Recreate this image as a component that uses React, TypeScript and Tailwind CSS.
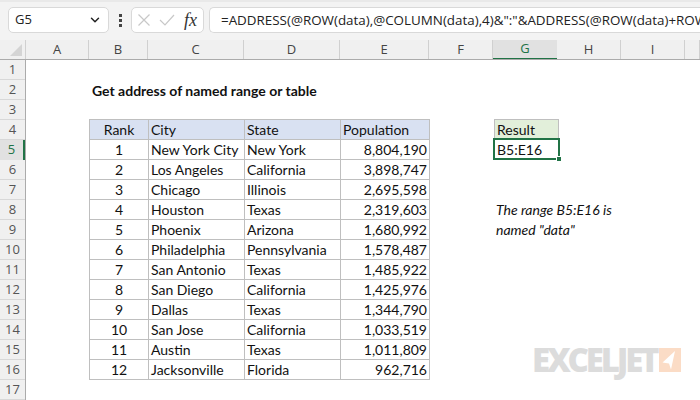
import { ChevronDown } from 'lucide-react';

const columns = [
  { name: 'A', width: 63 },
  { name: 'B', width: 59 },
  { name: 'C', width: 96 },
  { name: 'D', width: 96 },
  { name: 'E', width: 89 },
  { name: 'F', width: 64 },
  { name: 'G', width: 64 },
  { name: 'H', width: 64 },
  { name: 'I', width: 64 },
  { name: '', width: 15 },
];

const rowNumbers = Array.from({ length: 17 }, (_, i) => i + 1);

const cities = [
  ['1', 'New York City', 'New York', '8,804,190'],
  ['2', 'Los Angeles', 'California', '3,898,747'],
  ['3', 'Chicago', 'Illinois', '2,695,598'],
  ['4', 'Houston', 'Texas', '2,319,603'],
  ['5', 'Phoenix', 'Arizona', '1,680,992'],
  ['6', 'Philadelphia', 'Pennsylvania', '1,578,487'],
  ['7', 'San Antonio', 'Texas', '1,485,922'],
  ['8', 'San Diego', 'California', '1,425,976'],
  ['9', 'Dallas', 'Texas', '1,344,790'],
  ['10', 'San Jose', 'California', '1,033,519'],
  ['11', 'Austin', 'Texas', '1,011,809'],
  ['12', 'Jacksonville', 'Florida', '962,716'],
];

const formula = '=ADDRESS(@ROW(data),@COLUMN(data),4)&":"&ADDRESS(@ROW(data)+ROWS(data)-1,@COLUMN(data)+COLUMNS(data)-1,4)';

function FormulaBar() {
  return (
    <div className="h-[40px] flex items-start bg-[#f3f3f3] border-t-2 border-[#e9e9e9] pt-[5px] pl-[8px] text-[13px] text-[#222]">
      <div className="w-[101px] h-[26px] flex items-center justify-between pl-[6px] pr-[6px] bg-white border border-[#d9d9d9] rounded-[5px]">
        <span>G5</span>
        <ChevronDown size={14} strokeWidth={2.5} />
      </div>
      <div className="w-[22px] h-[26px] flex flex-col items-center justify-center gap-[2px]">
        <span className="w-[3px] h-[3px] bg-[#444]" />
        <span className="w-[3px] h-[3px] bg-[#444]" />
        <span className="w-[3px] h-[3px] bg-[#444]" />
      </div>
      <div className="w-[73px] h-[26px] flex items-center gap-[9px] pl-[6px] bg-white border border-[#d9d9d9] rounded-[5px]">
        <svg width="12" height="12" viewBox="0 0 12 12" fill="none" stroke="#c8c8c8" strokeWidth="1.2">
          <path d="M0.5 0.5l11 11M11.5 0.5l-11 11" />
        </svg>
        <svg width="16" height="12" viewBox="0 0 16 12" fill="none" stroke="#c8c8c8" strokeWidth="1.2">
          <path d="M1 6l5 5L15 1" />
        </svg>
        <span className="font-['Liberation_Serif',serif] italic text-[18px] leading-none text-[#333]">fx</span>
      </div>
      <div className="w-[5px]" />
      <div className="flex-1 min-w-0 h-[26px] flex items-center pl-[11px] bg-white border border-r-0 border-[#d9d9d9] rounded-l-[5px] overflow-hidden whitespace-nowrap text-[13.4px]">
        {formula}
      </div>
    </div>
  );
}

function ColumnHeaders() {
  return (
    <div className="h-[20px] flex overflow-hidden bg-[#f0f0f0] border-b border-[#ababab]">
      <div className="w-[26px] shrink-0 relative border-r border-[#d0d0d0]">
        <div className="absolute right-[3px] bottom-[3px] w-0 h-0 border-l-[12px] border-l-transparent border-b-[12px] border-b-[#d4d4d4]" />
      </div>
      {columns.map(col => (
        <div
          key={col.name}
          style={{ width: col.width }}
          className={
            col.name === 'G'
              ? 'shrink-0 h-[20px] flex items-center justify-center bg-[#e1e1e1] border-b-2 border-[#217346] text-[#217346]'
              : 'shrink-0 flex items-center justify-center border-r border-[#d0d0d0] text-[#444]'
          }
        >
          {col.name}
        </div>
      ))}
    </div>
  );
}

function RowHeaders() {
  return (
    <div className="w-[26px] shrink-0 bg-[#f0f0f0] border-r border-[#ababab]">
      {rowNumbers.map(n => (
        <div
          key={n}
          className={
            n === 5
              ? 'h-[20px] flex items-center justify-center bg-[#e1e1e1] border-r-2 border-[#217346] text-[#217346]'
              : 'h-[20px] flex items-center justify-center border-b border-[#d8d8d8] text-[#555]'
          }
        >
          {n}
        </div>
      ))}
    </div>
  );
}

function CityTable() {
  return (
    <table className="w-[340px] h-[260px] table-fixed border-collapse text-[14px] leading-[19px] text-[#111]">
      <colgroup>
        <col className="w-[59px]" />
        <col className="w-[96px]" />
        <col className="w-[96px]" />
        <col className="w-[89px]" />
      </colgroup>
      <thead>
        <tr className="h-[20px] bg-[#d9e1f2]">
          <th className="border border-[#bfbfbf] font-normal p-0 text-center">Rank</th>
          <th className="border border-[#bfbfbf] font-normal px-[2px] py-0 text-left">City</th>
          <th className="border border-[#bfbfbf] font-normal px-[2px] py-0 text-left">State</th>
          <th className="border border-[#bfbfbf] font-normal px-[2px] py-0 text-left">Population</th>
        </tr>
      </thead>
      <tbody>
        {cities.map(row => (
          <tr key={row[0]} className="h-[20px]">
            <td className="border border-[#bfbfbf] p-0 text-center">{row[0]}</td>
            <td className="border border-[#bfbfbf] px-[2px] py-0 whitespace-nowrap">{row[1]}</td>
            <td className="border border-[#bfbfbf] px-[2px] py-0 whitespace-nowrap">{row[2]}</td>
            <td className="border border-[#bfbfbf] px-[2px] py-0 text-right">{row[3]}</td>
          </tr>
        ))}
      </tbody>
    </table>
  );
}

function ResultPanel() {
  return (
    <div className="w-[130px] text-[14px] leading-[19px] text-[#111]">
      <div className="w-[65px] h-[20px] flex items-center pl-[2px] bg-[#e2efda] border border-b-0 border-[#bfbfbf]">Result</div>
      <div className="relative w-[67px] h-[22px] -ml-px -mt-px flex items-center pl-[2px] border-2 border-[#217346]">
        B5:E16
        <span className="absolute -right-[4px] -bottom-[4px] w-[6px] h-[6px] bg-[#217346] border border-white" />
      </div>
      <p className="mt-[40px] w-[140px] pl-[2px] italic leading-[20px]">The range B5:E16 is named "data"</p>
    </div>
  );
}

function Sheet() {
  return (
    <div className="relative flex-1 min-w-0 bg-white font-['Lato',sans-serif]">
      <div className="h-[20px]" />
      <div className="h-[20px] pl-[66px] flex items-center text-[14px] font-bold text-[#111]">
        Get address of named range or table
      </div>
      <div className="h-[20px] -mb-px" />
      <div className="flex pl-[63px] gap-[64px]">
        <CityTable />
        <ResultPanel />
      </div>
      <div className="absolute left-[506px] top-[288px] flex items-start gap-[3px]">
        <span className="font-['Open_Sans',sans-serif] text-[33px] leading-[24px] font-extrabold tracking-[-3.2px] text-[#dcdcdc]">EXCELJET</span>
        <svg width="22" height="24" viewBox="0 0 22 24">
          <rect width="22" height="24" fill="#fbdcc6" />
          <path d="M16 3L3.5 14.5l6.5 1 2 6z" fill="#fff" />
        </svg>
      </div>
    </div>
  );
}

export default function App() {
  return (
    <div className="w-[700px] h-[400px] flex flex-col overflow-hidden font-['Open_Sans',sans-serif] text-[13px]">
      <FormulaBar />
      <ColumnHeaders />
      <div className="flex-1 min-h-0 flex overflow-hidden">
        <RowHeaders />
        <Sheet />
      </div>
    </div>
  );
}
